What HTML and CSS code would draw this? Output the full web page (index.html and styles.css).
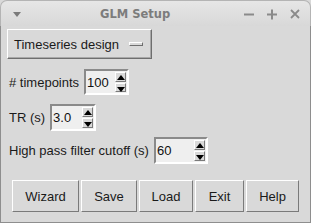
FILE: index.html
```html
<!DOCTYPE html>
<html lang="en">
<head>
  <meta charset="UTF-8" />
  <title>GLM Setup</title>
  <link rel="stylesheet" href="styles.css">
</head>
<body>
  <div class="window">
    <div class="titlebar">
      <svg class="tb-menu" width="10" height="8" viewBox="0 0 10 8"><path d="M1 2 L9 2 L5 7 Z" fill="#7a7a7a"/></svg>
      <div class="tb-title">GLM Setup</div>
      <div class="tb-controls">
        <svg width="12" height="12" viewBox="0 0 12 12"><path d="M1 6.5 H11" stroke="#8a8a8a" stroke-width="2"/></svg>
        <svg width="12" height="12" viewBox="0 0 12 12"><path d="M1 6.5 H11 M6 1.5 V11.5" stroke="#8a8a8a" stroke-width="2"/></svg>
        <svg width="12" height="12" viewBox="0 0 12 12"><path d="M2 2 L10 10 M10 2 L2 10" stroke="#8a8a8a" stroke-width="1.8"/></svg>
      </div>
    </div>
    <div class="content">
      <div class="menubtn">
        <span>Timeseries design</span>
        <span class="indicator"></span>
      </div>

      <div class="row row-tp">
        <label># timepoints</label>
        <div class="spinbox w-tp">
          <span class="field">100</span>
          <span class="arrows"><span class="arr up"></span><span class="arr down"></span></span>
        </div>
      </div>

      <div class="row row-tr">
        <label>TR (s)</label>
        <div class="spinbox w-tr">
          <span class="field">3.0</span>
          <span class="arrows"><span class="arr up"></span><span class="arr down"></span></span>
        </div>
      </div>

      <div class="row row-hp">
        <label>High pass filter cutoff (s)</label>
        <div class="spinbox w-hp">
          <span class="field">60</span>
          <span class="arrows"><span class="arr up"></span><span class="arr down"></span></span>
        </div>
      </div>

      <div class="buttons">
        <button class="btn w-wiz">Wizard</button>
        <button class="btn w-save">Save</button>
        <button class="btn w-load">Load</button>
        <button class="btn w-exit">Exit</button>
        <button class="btn w-help">Help</button>
      </div>
    </div>
  </div>
</body>
</html>
```

FILE: styles.css
```css
* { margin: 0; padding: 0; box-sizing: border-box; }
html, body {
  width: 311px;
  height: 223px;
  overflow: hidden;
  background: #d9d9d9;
  font-family: "Liberation Sans", Arial, sans-serif;
  font-size: 13px;
  color: #1a1a1a;
}
.window {
  width: 311px;
  height: 223px;
  display: flex;
  flex-direction: column;
}
.titlebar {
  height: 26px;
  flex: none;
  display: flex;
  align-items: center;
  background: linear-gradient(#e6e6e6, #d8d8d8);
  border: 1px solid #b4b4b4;
  border-bottom: none;
  border-radius: 7px 7px 0 0;
}
.tb-menu { margin-left: 11px; margin-top: 1px; }
.tb-title {
  margin-left: 78px;
  font-family: "DejaVu Sans", sans-serif;
  font-weight: bold;
  font-size: 11.5px;
  color: #7c7c7c;
}
.tb-controls {
  margin-left: auto;
  margin-right: 9px;
  display: flex;
  gap: 11px;
}
.content {
  flex: 1;
  border-left: 1px solid #8e8e8e;
  border-right: 1px solid #8e8e8e;
  border-bottom: 1px solid #8e8e8e;
  padding: 3px 0 0 6px;
}
.menubtn {
  width: 145px;
  height: 30px;
  display: flex;
  align-items: center;
  padding-left: 6px;
  border: 1px solid;
  border-color: #fff #6e6e6e #6e6e6e #fff;
  box-shadow: inset -1px -1px 0 #a8a8a8;
}
.indicator {
  width: 14px;
  height: 4px;
  margin-left: auto;
  margin-right: 8px;
  border: 1px solid;
  border-color: #fff #6e6e6e #6e6e6e #fff;
}
.row {
  display: flex;
  align-items: center;
  padding-left: 2px;
}
.row label { margin-right: 5px; }
.row-tp { margin-top: 10px; }
.row-tr { margin-top: 9px; }
.row-hp { margin-top: 6px; }
.spinbox {
  height: 27px;
  display: flex;
  align-items: stretch;
  border: 2px solid;
  border-color: #8a8a8a #fff #fff #8a8a8a;
  background: #efefef;
}
.w-tp { width: 45px; height: 26px; }
.w-tr { width: 46px; }
.w-hp { width: 54px; }
.field {
  flex: 1;
  padding-left: 1px;
  display: flex;
  align-items: center;
  color: #111;
}
.arrows {
  width: 11px;
  display: flex;
  flex-direction: column;
  margin: 1px 1px 1px 0;
  gap: 1px;
}
.arr {
  flex: 1;
  background: #d9d9d9;
  border: 1px solid;
  border-color: #fff #7a7a7a #7a7a7a #fff;
  position: relative;
}
.arr::after {
  content: "";
  position: absolute;
  left: 1px;
  border-left: 4px solid transparent;
  border-right: 4px solid transparent;
}
.arr.up::after { top: 2px; border-bottom: 5px solid #000; }
.arr.down::after { top: 3px; border-top: 5px solid #000; }
.buttons {
  display: flex;
  gap: 2px;
  margin-top: 16px;
  padding-left: 5px;
}
.btn {
  height: 32px;
  font-family: inherit;
  font-size: 13px;
  color: #1a1a1a;
  background: #d9d9d9;
  border: 1px solid;
  border-color: #fff #7a7a7a #7a7a7a #fff;
}
.w-wiz { width: 67px; }
.w-save { width: 56px; }
.w-load { width: 54px; }
.w-exit { width: 49px; }
.w-help { width: 53px; }
```
